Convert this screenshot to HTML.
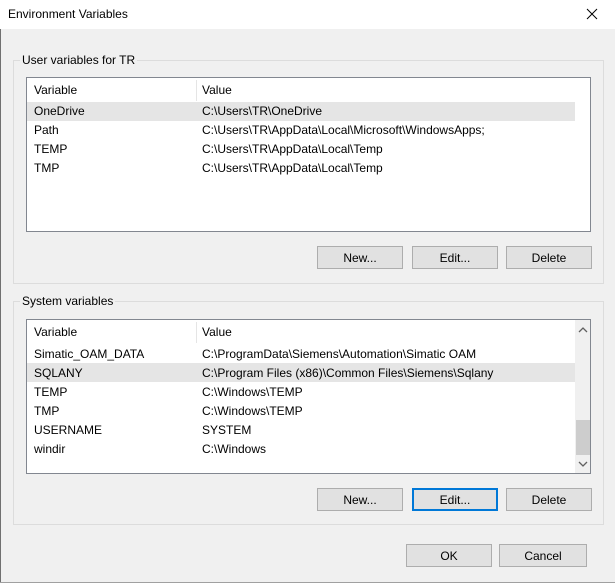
<!DOCTYPE html>
<html><head><style>
*{margin:0;padding:0;box-sizing:border-box}
body{width:615px;height:583px;background:#f0f0f0;font-family:"Liberation Sans",sans-serif;font-size:12px;color:#000;position:relative;overflow:hidden}
.a{position:absolute}
.title{left:0;top:0;width:615px;height:29px;background:#fff}
.gb{border:1px solid #dcdcdc}
.lbl{background:#f0f0f0;padding:0 2px;white-space:nowrap}
.list{background:#fff;border:1px solid #828790;overflow:hidden}
.t{white-space:nowrap}
.btn{background:#e1e1e1;border:1px solid #adadad;text-align:center;line-height:23px}
.btn.f{border:2px solid #0078d7;line-height:21px}
</style></head><body>
<div class="a title"></div>
<div class="a" style="left:0;top:29px;width:1px;height:554px;background:#707070"></div>
<div class="a t" style="left:8px;top:7px">Environment Variables</div>
<svg class="a" style="left:586px;top:8px" width="12" height="12"><path d="M1 1L11 11M11 1L1 11" stroke="#000" stroke-width="1"/></svg>

<div class="a gb" style="left:13px;top:60px;width:591px;height:224px"></div>
<div class="a lbl" style="left:20px;top:53px">User variables for TR</div>
<div class="a list" style="left:26px;top:77px;width:565px;height:155px">
 <div class="a" style="left:169px;top:2px;width:1px;height:21px;background:#e5e5e5"></div>
 <div class="a t" style="left:7px;top:5px">Variable</div>
 <div class="a t" style="left:175px;top:5px">Value</div>
 <div class="a" style="left:0;top:24px;width:548px;height:19px;background:#e5e5e5"></div>
 <div class="a t" style="left:7px;top:26px">OneDrive</div><div class="a t" style="left:175px;top:26px">C:\Users\TR\OneDrive</div>
 <div class="a t" style="left:7px;top:45px">Path</div><div class="a t" style="left:175px;top:45px">C:\Users\TR\AppData\Local\Microsoft\WindowsApps;</div>
 <div class="a t" style="left:7px;top:64px">TEMP</div><div class="a t" style="left:175px;top:64px">C:\Users\TR\AppData\Local\Temp</div>
 <div class="a t" style="left:7px;top:83px">TMP</div><div class="a t" style="left:175px;top:83px">C:\Users\TR\AppData\Local\Temp</div>
</div>
<div class="a btn" style="left:317px;top:246px;width:86px;height:23px">New...</div>
<div class="a btn" style="left:412px;top:246px;width:86px;height:23px">Edit...</div>
<div class="a btn" style="left:506px;top:246px;width:86px;height:23px">Delete</div>

<div class="a gb" style="left:13px;top:301px;width:591px;height:224px"></div>
<div class="a lbl" style="left:20px;top:294px">System variables</div>
<div class="a list" style="left:26px;top:319px;width:565px;height:155px">
 <div class="a" style="left:169px;top:2px;width:1px;height:21px;background:#e5e5e5"></div>
 <div class="a t" style="left:7px;top:5px">Variable</div>
 <div class="a t" style="left:175px;top:5px">Value</div>
 <div class="a t" style="left:7px;top:27px">Simatic_OAM_DATA</div><div class="a t" style="left:175px;top:27px">C:\ProgramData\Siemens\Automation\Simatic OAM</div>
 <div class="a" style="left:0;top:43px;width:548px;height:19px;background:#e5e5e5"></div>
 <div class="a t" style="left:7px;top:46px">SQLANY</div><div class="a t" style="left:175px;top:46px">C:\Program Files (x86)\Common Files\Siemens\Sqlany</div>
 <div class="a t" style="left:7px;top:65px">TEMP</div><div class="a t" style="left:175px;top:65px">C:\Windows\TEMP</div>
 <div class="a t" style="left:7px;top:84px">TMP</div><div class="a t" style="left:175px;top:84px">C:\Windows\TEMP</div>
 <div class="a t" style="left:7px;top:103px">USERNAME</div><div class="a t" style="left:175px;top:103px">SYSTEM</div>
 <div class="a t" style="left:7px;top:122px">windir</div><div class="a t" style="left:175px;top:122px">C:\Windows</div>
 <div class="a" style="left:548px;top:0;width:16px;height:153px;background:#f0f0f0"></div>
 <div class="a" style="left:549px;top:100px;width:14px;height:35px;background:#cdcdcd"></div>
 <svg class="a" style="left:551px;top:6px" width="10" height="8"><path d="M1 6L5 2L9 6" stroke="#606060" fill="none" stroke-width="1.3"/></svg>
 <svg class="a" style="left:551px;top:140px" width="10" height="8"><path d="M1 2L5 6L9 2" stroke="#606060" fill="none" stroke-width="1.3"/></svg>
</div>
<div class="a btn" style="left:317px;top:488px;width:86px;height:23px">New...</div>
<div class="a btn f" style="left:412px;top:488px;width:86px;height:23px">Edit...</div>
<div class="a btn" style="left:506px;top:488px;width:86px;height:23px">Delete</div>

<div class="a btn" style="left:406px;top:544px;width:86px;height:23px">OK</div>
<div class="a btn" style="left:499px;top:544px;width:88px;height:23px">Cancel</div>
<div class="a" style="left:0;top:582px;width:615px;height:1px;background:#a0a0a0"></div>
</body></html>
